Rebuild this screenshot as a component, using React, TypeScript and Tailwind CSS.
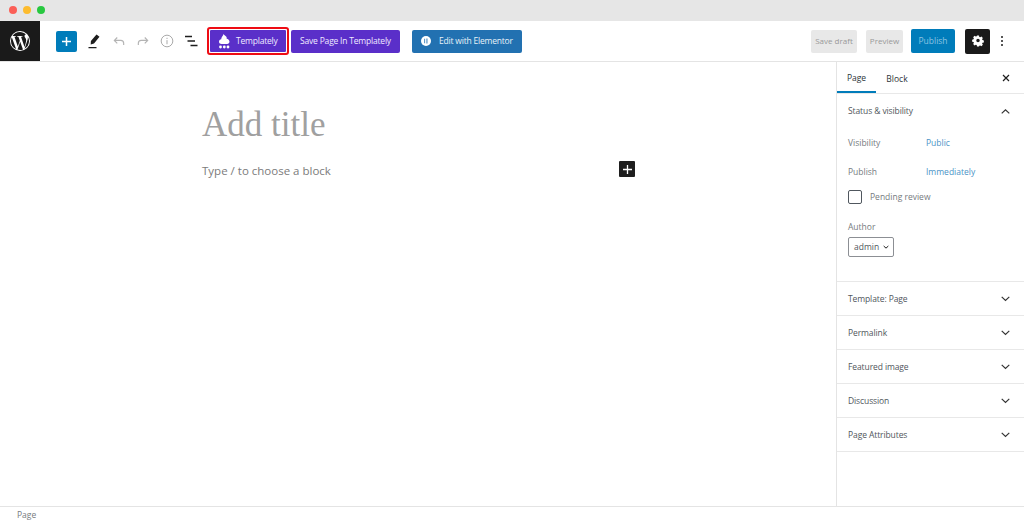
import React from "react";

const Chevron = ({ up = false }: { up?: boolean }) => (
  <svg width="13" height="13" viewBox="0 0 24 24" fill="none" stroke="#333" strokeWidth="2.200">
    <path d={up ? "M5 15.500l7-6.500 7 6.500" : "M5 9l7 6.500L19 9"} />
  </svg>
);

const Section = ({ title }: { title: string }) => (
  <div className="flex h-[34px] items-center justify-between border-b border-[#e8e8e8] pl-[11px] pr-[12px] text-[8.500px] font-medium tracking-[-0.1px] text-[#50565c]">
    <span className="pt-[2px]">{title}</span>
    <Chevron />
  </div>
);

export default function App() {
  return (
    <div className="flex h-[523px] w-[1024px] flex-col overflow-hidden bg-white font-['Open_Sans',sans-serif] text-[#1e1e1e]">
      <div className="flex h-[21px] shrink-0 items-center gap-[6px] bg-[#e6e6e6] pb-[2px] pl-[9px]">
        <span className="h-[8px] w-[8px] rounded-full bg-[#fb5f57]" />
        <span className="h-[8px] w-[8px] rounded-full bg-[#fdbc2e]" />
        <span className="h-[8px] w-[8px] rounded-full bg-[#28c840]" />
      </div>

      <div className="flex h-[41px] shrink-0 items-center border-b border-[#e4e4e4]">
        <div className="flex h-[40px] w-[40px] shrink-0 items-center justify-center self-start bg-[#1a1a1a]">
          <svg width="20" height="20" viewBox="0 0 20 20" fill="#fff">
            <path d="M10 0a10 10 0 1 0 0 20 10 10 0 0 0 0-20zM1 10c0-1.300.3-2.500.8-3.700l4.300 11.800A9 9 0 0 1 1 10zm9 9c-.9 0-1.700-.1-2.500-.4l2.700-7.800 2.700 7.500.1.100A9 9 0 0 1 10 19zm1.200-13.200c.5 0 1-.1 1-.1.500-.1.400-.8-.1-.8 0 0-1.400.1-2.300.1-.9 0-2.300-.1-2.300-.1-.5 0-.5.800-.1.800 0 0 .5.100 1 .1l1.400 3.900-2 5.900-3.300-9.800c.5 0 1-.1 1-.1.500-.1.400-.8-.1-.8 0 0-1.400.1-2.300.1h-.6A9 9 0 0 1 10 1c2.300 0 4.500.9 6.100 2.400h-.1c-.9 0-1.500.7-1.500 1.500 0 .7.400 1.300.9 2.100.4.600.8 1.400.8 2.600 0 .8-.3 1.800-.7 3.100l-1 3.200-3.300-9.600zm3.300 12l2.700-7.900c.5-1.300.7-2.300.7-3.200 0-.3 0-.6-.1-.9A9 9 0 0 1 19 10a9 9 0 0 1-4.500 7.800z" />
          </svg>
        </div>

        <div className="ml-[16px] flex h-[21px] w-[21px] items-center justify-center rounded-[2px] bg-[#007cba]">
          <svg width="11" height="11" viewBox="0 0 11 11" stroke="#fff" strokeWidth="1.500"><path d="M5.500 1v9M1 5.500h9" /></svg>
        </div>
        <svg className="ml-[10px]" width="14" height="16" viewBox="0 0 14 16" fill="#1e1e1e">
          <path d="M9.500 1.500l3 2.300-5.500 6.700-3.300 1 .2-3.500zM1.500 14h8v1.300h-8z" />
        </svg>
        <svg className="ml-[11px]" width="14" height="14" viewBox="0 0 24 24" fill="none" stroke="#b4b4b4" strokeWidth="2">
          <path d="M9 6L4 11l5 5M4 11h11a5 5 0 0 1 5 5v3" />
        </svg>
        <svg className="ml-[10px]" width="14" height="14" viewBox="0 0 24 24" fill="none" stroke="#b4b4b4" strokeWidth="2">
          <path d="M15 6l5 5-5 5M20 11H9a5 5 0 0 0-5 5v3" />
        </svg>
        <svg className="ml-[10px]" width="14" height="14" viewBox="0 0 24 24" fill="none" stroke="#a8a8a8" strokeWidth="1.700">
          <circle cx="12" cy="12" r="10" />
          <path d="M12 10.500v7M12 6.500v2" />
        </svg>
        <svg className="ml-[10px]" width="14" height="12" viewBox="0 0 14 12" stroke="#1e1e1e" strokeWidth="1.400">
          <path d="M1 1.500h7M3.500 6h7.500M6.500 10.500h7" />
        </svg>

        <div className="ml-[9px] rounded-[3px] border-2 border-[#ee0c14]">
          <div className="flex h-[24px] w-[78px] items-center rounded-[2px] border border-white bg-[#5a2fc9] pl-[8px] text-[8.500px] tracking-[-0.2px] text-[#efeaff]">
            <svg width="13" height="15" viewBox="0 0 13 15" fill="#fff">
              <path d="M5.500 0c.4 1.300 2.400 1.800 3 3 .3.600.3 1.200.1 1.800C10.200 5 11.500 6.200 11.500 7.800c0 1.200-1 2.200-2.300 2.200H3.500C2.200 10 1 9 1 7.700 1 6.400 2 5.500 3.200 5.300 3.300 3.200 5 2 5.500 0z" />
              <circle cx="2.500" cy="13" r="1.400" /><circle cx="6.300" cy="13" r="1.400" /><circle cx="10" cy="13" r="1.400" />
            </svg>
            <span className="ml-[5px] whitespace-nowrap">Templately</span>
          </div>
        </div>
        <div className="ml-[2px] flex h-[23px] w-[109px] items-center justify-center rounded-[2px] bg-[#5a2fc9] text-[8.500px] tracking-[-0.2px] whitespace-nowrap text-[#efeaff]">
          Save Page In Templately
        </div>
        <div className="ml-[12px] flex h-[23px] w-[110px] items-center rounded-[2px] bg-[#2271b1] pl-[9px] text-[8.500px] tracking-[-0.2px] whitespace-nowrap text-[#e8f1f8]">
          <svg width="10" height="10" viewBox="0 0 10 10">
            <circle cx="5" cy="5" r="5" fill="#fff" />
            <path d="M3.300 2.700h.8v4.600h-.8zM5 2.700h1.800v.8H5zM5 4.600h1.800v.8H5zM5 6.500h1.800v.8H5z" fill="#2271b1" />
          </svg>
          <span className="ml-[8px]">Edit with Elementor</span>
        </div>

        <div className="ml-auto flex items-center">
          <div className="flex h-[23px] w-[46px] items-center justify-center rounded-[2px] bg-[#e8e8e8] text-[8px] whitespace-nowrap text-[#999]">Save draft</div>
          <div className="ml-[9px] flex h-[23px] w-[37px] items-center justify-center rounded-[2px] bg-[#e8e8e8] text-[8px] text-[#999]">Preview</div>
          <div className="ml-[8px] flex h-[24px] w-[44px] items-center justify-center rounded-[2px] bg-[#007cba] text-[8.500px] text-[#8cc4e2]">Publish</div>
          <div className="ml-[10px] flex h-[25px] w-[25px] items-center justify-center rounded-[2px] bg-[#1a1a1a]">
            <svg width="12" height="12" viewBox="0 0 24 24" fill="#fff" fillRule="evenodd">
              <path d="M10 2h4l.6 2.800 1.800.8 2.500-1.500 2.800 2.800-1.500 2.500.7 1.800 2.800.6v4l-2.800.6-.7 1.800 1.500 2.500-2.800 2.800-2.500-1.500-1.800.7L14 24h-4l-.6-2.800-1.800-.7-2.500 1.500-2.800-2.800 1.500-2.500-.7-1.800L.3 14.300v-4l2.800-.6.7-1.800-1.500-2.500L5.100 2.600l2.500 1.500 1.800-.7zM12 8.500a3.500 3.500 0 1 0 0 7 3.500 3.500 0 0 0 0-7z" transform="translate(0 -1)" />
            </svg>
          </div>
          <div className="ml-[11px] mr-[21px] flex flex-col gap-[2px]">
            <span className="h-[2px] w-[2px] rounded-full bg-[#1e1e1e]" />
            <span className="h-[2px] w-[2px] rounded-full bg-[#1e1e1e]" />
            <span className="h-[2px] w-[2px] rounded-full bg-[#1e1e1e]" />
          </div>
        </div>
      </div>

      <div className="flex min-h-0 flex-1">
        <div className="flex-1">
          <div className="ml-[202px] w-[433px]">
            <div className="mt-[39px] font-['Liberation_Serif',serif] text-[35px] leading-[47px] text-[#a0a0a0]">Add title</div>
            <div className="mt-[14px] flex h-[18px] items-center justify-between">
              <span className="text-[11.500px] text-[#7b7b7b]">Type / to choose a block</span>
              <div className="-mt-[4px] flex h-[16px] w-[16px] items-center justify-center rounded-[1px] bg-[#1e1e1e]">
                <svg width="9" height="9" viewBox="0 0 9 9" stroke="#fff" strokeWidth="1.300"><path d="M4.500 0v9M0 4.500h9" /></svg>
              </div>
            </div>
          </div>
        </div>

        <div className="w-[188px] shrink-0 border-l border-[#e4e4e4]">
          <div className="flex h-[32px] items-stretch border-b border-[#e8e8e8] text-[8.500px] font-medium">
            <div className="flex w-[39px] items-center justify-center border-b-2 border-[#007cba] pt-[3px] text-[#2c3338]">Page</div>
            <div className="ml-[3px] flex w-[36px] items-center justify-center pt-[3px] text-[#2c3338]">Block</div>
            <div className="ml-auto mr-[14px] flex items-center">
              <svg width="8" height="8" viewBox="0 0 8 8" stroke="#1e1e1e" strokeWidth="1.200"><path d="M1 1l6 6M7 1L1 7" /></svg>
            </div>
          </div>

          <div className="h-[188px] border-b border-[#e8e8e8] pl-[11px] pr-[11px]">
            <div className="flex h-[34px] items-center justify-between pr-[1px] text-[8.500px] font-medium tracking-[-0.1px] text-[#50565c]">
              <span>Status &amp; visibility</span>
              <Chevron up />
            </div>
            <div className="mt-[8px] flex h-[14px] items-center text-[8.500px]">
              <span className="w-[78px] text-[#767b80]">Visibility</span>
              <span className="text-[#4a93c6]">Public</span>
            </div>
            <div className="mt-[15px] flex h-[14px] items-center text-[8.500px]">
              <span className="w-[78px] text-[#767b80]">Publish</span>
              <span className="text-[#4a93c6]">Immediately</span>
            </div>
            <div className="mt-[10px] flex h-[16px] items-center text-[8.500px] text-[#767b80]">
              <span className="h-[14px] w-[14px] rounded-[2px] border border-[#50575e]" />
              <span className="ml-[8px]">Pending review</span>
            </div>
            <div className="mt-[16px] text-[8.500px] leading-[12px] text-[#767b80]">Author</div>
            <div className="mt-[4px] flex h-[20px] w-[46px] items-center justify-between rounded-[2px] border border-[#8c8f94] pl-[5px] pr-[3px] text-[8.500px] text-[#50575e]">
              <span>admin</span>
              <svg width="8" height="8" viewBox="0 0 24 24" fill="none" stroke="#1e1e1e" strokeWidth="3"><path d="M5 9l7 6.500L19 9" /></svg>
            </div>
          </div>

          <Section title="Template: Page" />
          <Section title="Permalink" />
          <Section title="Featured image" />
          <Section title="Discussion" />
          <Section title="Page Attributes" />
        </div>
      </div>

      <div className="flex h-[17px] shrink-0 items-center border-t border-[#e4e4e4] pl-[17px] text-[8.500px] text-[#767b80]">Page</div>
    </div>
  );
}
